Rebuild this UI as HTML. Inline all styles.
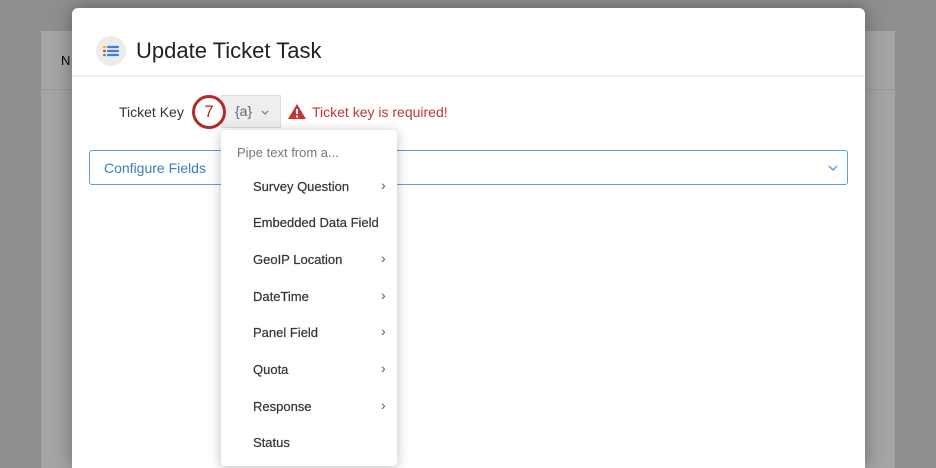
<!DOCTYPE html>
<html style="width:936px;height:468px;overflow:hidden"><head><style>
body{margin:0;width:936px;height:468px;overflow:hidden;background:#8e8e8e;font-family:"Liberation Sans",sans-serif;position:relative}
.panel{position:absolute;left:41px;top:31px;width:854px;height:437px;background:#a4a4a4}
.panel .hl{position:absolute;left:0;right:0;top:58px;height:1px;background:#999}
.modal{position:absolute;left:72px;top:8px;width:793px;height:460px;background:#fff;border-radius:6px 6px 0 0;box-shadow:0 0 18px rgba(0,0,0,.35)}
.title{position:absolute;left:136px;top:38px;font-size:22px;color:#222}
.icon{position:absolute;left:96px;top:36px;width:30px;height:30px;border-radius:50%;background:#ececec;overflow:hidden}
.hdr{position:absolute;left:72px;top:75px;width:793px;height:2px;background:#f0f0f0}
.lbl{position:absolute;left:119px;top:104px;font-size:14px;color:#333}
.seven{position:absolute;left:192px;top:95px;width:34px;height:34px;border:3px solid #b22a2a;border-radius:50%;box-sizing:border-box;text-align:center;line-height:28px;font-size:17px;color:#b22a2a;background:#fff;z-index:2}
.btn{position:absolute;left:221px;top:95px;width:60px;height:33px;background:#eee;border:1px solid #ddd;box-sizing:border-box;font-size:14px;color:#666;line-height:31px;padding-left:13px}
.err{position:absolute;left:312px;top:104px;font-size:14px;color:#c53535}
.cfg{position:absolute;left:89px;top:150px;width:759px;height:35px;border:1px solid #5fa0d8;border-radius:3px;box-sizing:border-box}
.cfg span{position:absolute;left:14px;top:9px;font-size:14px;color:#3a7fc1}
.menu{position:absolute;left:221px;top:130px;width:176px;height:336px;background:#fff;border-radius:4px;box-shadow:0 2px 12px rgba(0,0,0,.25)}
.mi{position:absolute;left:32px;font-size:13px;color:#333;-webkit-text-stroke:0.2px #333}
.ch{position:absolute;left:160px;font-size:14px;color:#555}
</style></head><body>
<div class="panel"><div class="hl"></div><span style="position:absolute;left:20px;top:22px;font-size:13px">N</span></div>
<div class="modal"></div>
<div class="icon"><svg width="30" height="30"><g stroke-width="2.2" stroke-linecap="round"><line x1="8" y1="11" x2="9" y2="11" stroke="#f0b400"/><line x1="12" y1="11" x2="22" y2="11" stroke="#3a82e0"/><line x1="8" y1="15" x2="9" y2="15" stroke="#e04040"/><line x1="12" y1="15" x2="22" y2="15" stroke="#3a82e0"/><line x1="8" y1="19" x2="9" y2="19" stroke="#30b060"/><line x1="12" y1="19" x2="22" y2="19" stroke="#3a82e0"/></g></svg></div>
<div class="title">Update Ticket Task</div>
<div class="hdr"></div>
<div class="lbl">Ticket Key</div>
<div class="btn">{a}<svg style="margin-left:9px;vertical-align:middle" width="8" height="5"><path d="M1 1 L4 4 L7 1" fill="none" stroke="#777" stroke-width="1.2"/></svg></div>
<div class="seven">7</div>
<svg style="position:absolute;left:287px;top:103px" width="20" height="17"><path d="M10 1 L19 16 L1 16 Z" fill="#c53535"/><rect x="9" y="6" width="2" height="5" fill="#fff"/><rect x="9" y="12.5" width="2" height="2" fill="#fff"/></svg>
<div class="err">Ticket key is required!</div>
<div class="cfg"><span>Configure Fields</span><svg style="position:absolute;left:738px;top:14px" width="10" height="7"><path d="M1 1 L5 5 L9 1" fill="none" stroke="#5fa0d8" stroke-width="1.5"/></svg></div>
<div class="menu">
<div class="mi" style="left:16px;top:15px;color:#777;-webkit-text-stroke:0">Pipe text from a...</div>
<div class="mi" style="top:49px">Survey Question</div><div class="ch" style="top:47px">&#8250;</div>
<div class="mi" style="top:85px">Embedded Data Field</div>
<div class="mi" style="top:122px">GeoIP Location</div><div class="ch" style="top:120px">&#8250;</div>
<div class="mi" style="top:159px">DateTime</div><div class="ch" style="top:157px">&#8250;</div>
<div class="mi" style="top:195px">Panel Field</div><div class="ch" style="top:193px">&#8250;</div>
<div class="mi" style="top:232px">Quota</div><div class="ch" style="top:230px">&#8250;</div>
<div class="mi" style="top:269px">Response</div><div class="ch" style="top:267px">&#8250;</div>
<div class="mi" style="top:305px">Status</div>
</div>
</body></html>
